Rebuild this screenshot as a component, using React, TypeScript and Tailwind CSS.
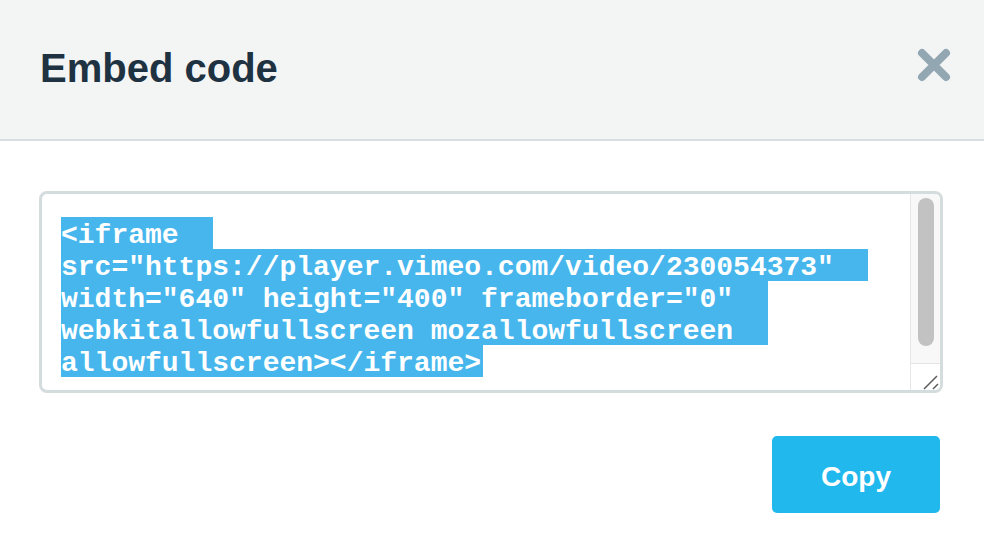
import React from "react"

const lines = [
  { text: "<iframe ", w: "w-[152px]" },
  { text: 'src="https://player.vimeo.com/video/230054373"', w: "w-[807px]" },
  { text: 'width="640" height="400" frameborder="0"', w: "w-[707px]" },
  { text: "webkitallowfullscreen mozallowfullscreen", w: "w-[707px]" },
  { text: "allowfullscreen></iframe>", w: "w-[422px]" },
]

function CloseIcon() {
  return (
    <svg width="34" height="34" viewBox="0 0 34 34" fill="none">
      <path d="M5 5 L29 29 M29 5 L5 29" stroke="#93a7b3" strokeWidth="8" strokeLinecap="round" />
    </svg>
  )
}

export default function App() {
  return (
    <div className="w-[984px] h-[560px] bg-white font-['Liberation_Sans',Arial,sans-serif]">
      {/* Header */}
      <div className="flex justify-between items-start h-[141px] pt-[48px] pl-10 pr-[33px] bg-[#f3f4f4] border-b-2 border-[#d6dee0]">
        <h1 className="text-[40px] leading-[40px] font-bold text-[#1e3241]">Embed code</h1>
        <button className="w-[34px] h-[34px]">
          <CloseIcon />
        </button>
      </div>

      {/* Body */}
      <div className="pt-[50px] pl-[39px] pr-[41px]">
        <div className="flex h-[202px] w-[904px] border-[3px] border-[#d4dcde] rounded-[8px] overflow-hidden">
          <div className="flex-1 pl-[19px] pt-[23px] font-['Liberation_Mono','Courier_New',monospace] font-bold text-[28px] text-white whitespace-pre">
            {lines.map((l, i) => (
              <div key={i} className={`h-[32px] leading-[37px] bg-[#46b6ec] ${l.w}`}>
                {l.text}
              </div>
            ))}
          </div>

          {/* Scrollbar + resizer */}
          <div className="w-[30px] flex flex-col border-l border-[#e6e6e6]">
            <div className="flex-1 bg-[#f8f8f8] flex justify-center pt-[4px] pb-[17px]">
              <div className="w-[16px] rounded-full bg-[#c2c2c2]" />
            </div>
            <div className="h-[27px] bg-white border-t border-[#e4e4e4] flex items-end justify-end">
              <svg width="20" height="16" viewBox="0 0 20 16">
                <path d="M4 15 L17 2 M13 15 L18 10" stroke="#5c5c5c" strokeWidth="1.5" />
              </svg>
            </div>
          </div>
        </div>

        <div className="flex justify-end pt-[43px] pr-[3px]">
          <button className="w-[168px] h-[77px] pt-[5px] rounded-[5px] bg-[#21b8ee] text-white text-[28px] font-bold">
            Copy
          </button>
        </div>
      </div>
    </div>
  )
}
